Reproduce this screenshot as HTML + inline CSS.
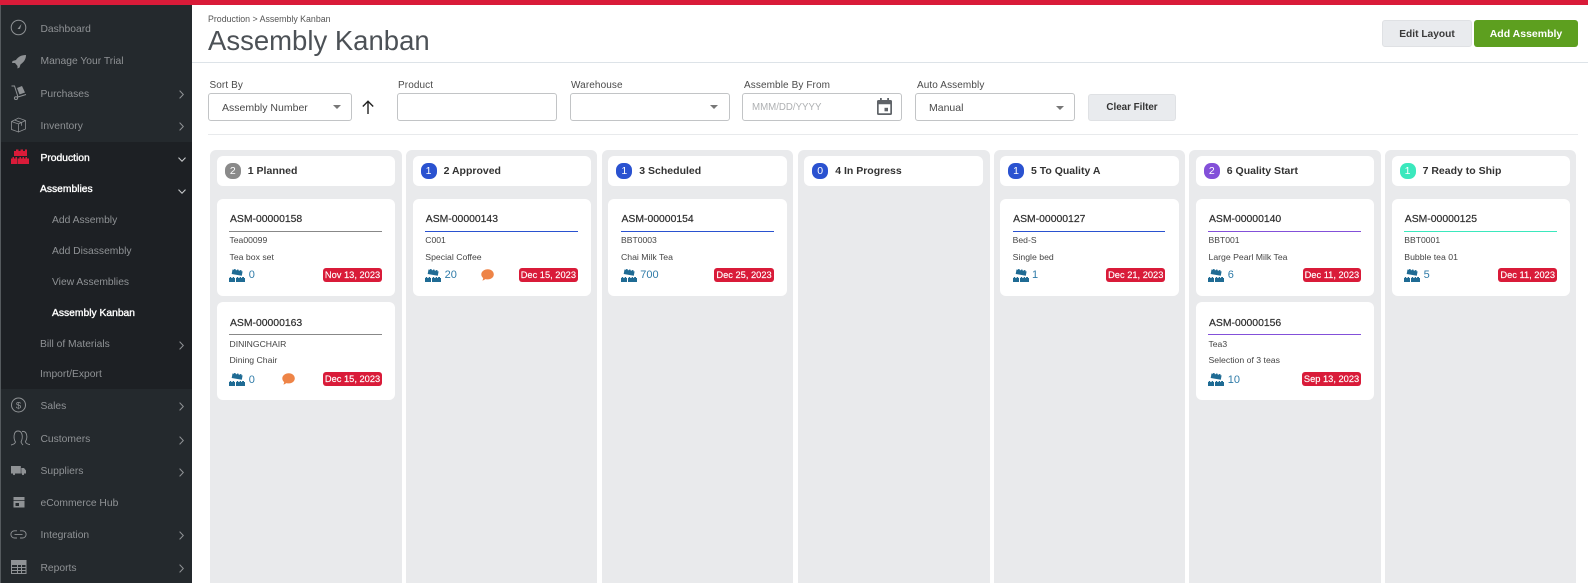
<!DOCTYPE html>
<html><head><meta charset="utf-8"><title>Assembly Kanban</title>
<style>
*{box-sizing:border-box}
html,body{margin:0;padding:0;width:1588px;height:583px;overflow:hidden;background:#fff;font-family:"Liberation Sans",sans-serif;color:#333}
.a,.t{position:absolute}
.t{white-space:nowrap;line-height:16px;height:16px}
#top{position:absolute;left:0;top:0;width:1588px;height:5px;background:#d91b39;z-index:3}
#side{position:absolute;left:0;top:0;width:192px;height:583px;background:#24292d;border-left:1px solid #555a5e}
#act{position:absolute;left:1px;top:142px;width:191px;height:247px;background:#1d2024}
.n{font-size:10.3px;color:#8f9295;margin-top:1px}
.n.w{color:#fff;-webkit-text-stroke:.35px #fff}
.ch{position:absolute;left:178.500px;width:5px;height:9px}
.l{font-size:10px;color:#4a4a4a;letter-spacing:.1px}
.i{position:absolute;border:1px solid #c2c4c6;border-radius:3px;height:28px;top:93px;background:#fff}
.car{position:absolute;width:0;height:0;border-left:4px solid transparent;border-right:4px solid transparent;border-top:4px solid #777;top:105px}
.v{font-size:10.5px;color:#4a4a4a}
.b{position:absolute;top:20px;height:27px;border-radius:3px;font-size:10.2px;font-weight:bold;text-align:center;line-height:27px}
.col{position:absolute;top:150px;height:433px;width:191.500px;background:#e9eaec;border-radius:6px 6px 0 0}
.h{position:absolute;left:6.800px;top:6px;width:178.600px;height:30px;background:#fff;border-radius:6px}
.bd{position:absolute;left:8px;top:7px;width:16px;height:16px;border-radius:7px;color:#fff;font-size:10.5px;text-align:center;line-height:16px}
.ht{position:absolute;left:31px;top:7px;line-height:16px;font-size:10.5px;font-weight:bold;color:#333;white-space:nowrap}
.c{position:absolute;left:6.800px;top:49px;width:178.600px;height:97px;background:#fff;border-radius:6px}
.c.two{top:152px;height:98px}
.c .ti{position:absolute;left:13.200px;top:13px;font-size:10.4px;line-height:16px;color:#2e2e2e;-webkit-text-stroke:.2px #2e2e2e;white-space:nowrap}
.c .ln{position:absolute;left:12.700px;right:13.200px;top:32px;height:1px;background:#888}
.c .co{position:absolute;left:12.700px;top:33px;font-size:8.600px;line-height:16px;color:#444;white-space:nowrap}
.c .de{position:absolute;left:12.700px;top:50px;font-size:8.700px;line-height:16px;color:#444;white-space:nowrap}
.c .ic{position:absolute;left:12.700px;top:69px;width:16px;height:14px}
.c .q{position:absolute;left:32px;top:68px;font-size:11px;line-height:16px;color:#2f7ba8}
.c .dt{position:absolute;right:13.200px;top:69px;height:14px;padding:0 2px;background:#d91b39;border-radius:3px;color:#fff;font-size:9.300px;line-height:14px;white-space:nowrap;-webkit-text-stroke:.15px #fff}
.c .m{position:absolute;top:71px;left:65px;width:13px;height:12px}
.two .ti{top:14px}.two .ln{top:32px}.two .co{top:34px}.two .de{top:50px}.two .ic{top:70px}.two .q{top:69.500px}.two .dt{top:70px}.two .m{top:71px}
.bl .ln{background:#2a52d0}
.pu .ln{background:#8350d9}
.te .ln{background:#3be8bd}
</style></head><body>
<svg width="0" height="0" style="position:absolute">
<symbol id="br" viewBox="0 0 16 14"><path d="M3.500 1.500l1.500.3.100-.8 1.700.3-.1.800 1.200.2.100-.8 1.700.3-.1.800 1.200.2.100-.8 1.700.3-.2.900 1.200.2-.8 4.400L2.700 6z" fill="currentColor"/><path d="M0 14V10h.8V9h1.400v1h1.500V9h1.400v1h.9v4zM7 14v-4h.8V9h1.400v1h1.500V9h1.400v1h1V9H15v1h1v4z" fill="currentColor"/></symbol>
<symbol id="cm" viewBox="0 0 13 12"><path d="M6.800.3C3.300.3.300 2.500.300 5.400c0 1.500.7 2.700 1.900 3.700L1.500 11.700l3-1.600c.7.200 1.500.3 2.300.3 3.400 0 6-2.200 6-5S10.200.3 6.800.3z" fill="#ee8447"/></symbol>
<symbol id="rt" viewBox="0 0 5 9"><path d="M.6.600L4.300 4.500.6 8.400" fill="none" stroke="#8f9295" stroke-width="1"/></symbol>
<symbol id="dn" viewBox="0 0 8 5"><path d="M.5.600L4 4.200 7.500.6" fill="none" stroke="#c8cacc" stroke-width="1.100"/></symbol>
</svg>
<div id="top"></div>
<div id="side"></div>
<div id="act"></div>

<!-- sidebar icons -->
<svg class="a" style="left:0;top:0" width="192" height="583" fill="none" stroke="#8f9295" stroke-width="1">
<circle cx="18.500" cy="27.500" r="7.300"/><path d="M17.500 29l4-5-1.500 5z" fill="#8f9295" stroke="none"/>
<path d="M26 55C21 55 18 57 16 60L12.500 61 12 63 15 63 17.500 66 17.500 68.500 19.500 67.500 20.500 64.500C24 62 26 59 26 55z" fill="#8f9295" stroke="none"/>
<path d="M11.500 86h3l3.500 11M16 99.500c1 0 1.600-.6 1.600-1.400s-.6-1.400-1.600-1.400-1.600.6-1.600 1.400.6 1.400 1.600 1.400zM18 97l8-2.500"/><path d="M17 88l5-2 3 6.500-5.500 2z" fill="#8f9295" stroke="none"/>
<path d="M11.500 121.500l7-3.500 7 2.500v8.500l-7 3-7-2.500zM11.500 121.500l7 2.500 7-3.500M18.500 124v8.500M14.500 120l7 2.700v3" stroke-width=".8"/>
<circle cx="18.500" cy="405" r="7"/><text x="18.500" y="408.500" font-size="9.500" fill="#8f9295" stroke="none" text-anchor="middle" font-family="Liberation Sans">$</text>
<path d="M11 445c2.500-.5 4-1.500 4.500-3-2-3-2.500-11 2.500-11s5 7 3 11c.5 1.500 1 2 2 3M22 431.500c5-1 6 6 3.500 10 0 1.500 2 3 4.500 3" stroke-width=".9"/>
<path d="M11 466h9.800v7.500H11zM21.300 468h2.700l2 2.500v3h-4.700z" fill="#8f9295" stroke="none"/><circle cx="14" cy="474" r="1.100" fill="#8f9295" stroke="none"/><circle cx="23" cy="474" r="1.100" fill="#8f9295" stroke="none"/>
<path d="M13.500 497h11v3h-11zM13.500 500.800h11v6.700h-11z" fill="#8f9295" stroke="none"/><path d="M15.500 503h3.500v3h-3.500z" fill="#24292d" stroke="none"/>
<path d="M17 530.800h-2.500a3.600 3.600 0 0 0 0 7.200h2.500M20 530.800h2.500a3.600 3.600 0 0 1 0 7.200H20M14.500 534.400h8" stroke-width=".9"/>
<path d="M11.500 560.500h14.500v13H11.500zM11.500 564.500h14.500M11.500 567.500h14.500M11.500 570.500h14.500M17.500 564.500v9M21.500 564.500v9"/><path d="M11.500 560.500h14.500v4H11.500z" fill="#8f9295" stroke="none"/>
<path d="M14 151h2v-1.500h2.500v1.500h2v-1.500H23v1.500h2v-1.500h2V156H14z" fill="#d91b39" stroke="none"/><path d="M11 164v-5.500h1.500V157H14v1.500h1.500V157H17v1.500h.5V164zM18 164v-5.500h1.500V157H21v1.500h1.500V157H24v1.500h1.500V157H27v1.500h2V164z" fill="#d91b39" stroke="none"/>
</svg>

<div class="t n" style="left:40.500px;top:20.500px">Dashboard</div>
<div class="t n" style="left:40.500px;top:52.500px">Manage Your Trial</div>
<div class="t n" style="left:40.500px;top:85.500px">Purchases</div>
<div class="t n" style="left:40.500px;top:117.500px">Inventory</div>
<div class="t n w" style="left:40.500px;top:149.500px">Production</div>
<div class="t n w" style="left:40px;top:180.500px">Assemblies</div>
<div class="t n" style="left:52px;top:211.500px">Add Assembly</div>
<div class="t n" style="left:52px;top:242.500px">Add Disassembly</div>
<div class="t n" style="left:52px;top:273.500px">View Assemblies</div>
<div class="t n w" style="left:52px;top:305px">Assembly Kanban</div>
<div class="t n" style="left:40px;top:335.500px">Bill of Materials</div>
<div class="t n" style="left:40px;top:365.500px">Import/Export</div>
<div class="t n" style="left:40.500px;top:397.500px">Sales</div>
<div class="t n" style="left:40.500px;top:430.500px">Customers</div>
<div class="t n" style="left:40.500px;top:463px">Suppliers</div>
<div class="t n" style="left:40.500px;top:495px">eCommerce Hub</div>
<div class="t n" style="left:40.500px;top:526.500px">Integration</div>
<div class="t n" style="left:40.500px;top:559.500px">Reports</div>

<svg class="ch" style="top:90px"><use href="#rt"/></svg>
<svg class="ch" style="top:122px"><use href="#rt"/></svg>
<svg class="ch" style="top:341px"><use href="#rt"/></svg>
<svg class="ch" style="top:402px"><use href="#rt"/></svg>
<svg class="ch" style="top:435.500px"><use href="#rt"/></svg>
<svg class="ch" style="top:467.500px"><use href="#rt"/></svg>
<svg class="ch" style="top:531px"><use href="#rt"/></svg>
<svg class="ch" style="top:564px"><use href="#rt"/></svg>
<svg class="a" style="left:178px;top:156.500px" width="8" height="5"><use href="#dn"/></svg>
<svg class="a" style="left:178px;top:188.500px" width="8" height="5"><use href="#dn"/></svg>

<!-- header -->
<div class="t" style="left:208px;top:11px;font-size:8.800px;color:#555">Production &gt; Assembly Kanban</div>
<div class="a" style="left:208px;top:24px;font-size:27.500px;line-height:34px;color:#4c5156;white-space:nowrap">Assembly Kanban</div>
<div class="a" style="left:192px;top:62px;width:1396px;height:1px;background:#dde3e8"></div>
<div class="b" style="left:1382px;width:90px;background:#e9ebee;border:1px solid #dfe1e4;color:#3a3a3a">Edit Layout</div>
<div class="b" style="left:1474px;width:104px;background:#5d9f1f;color:#fff;line-height:28px;font-size:10.5px">Add Assembly</div>

<!-- filters -->
<div class="t l" style="left:209.500px;top:77.500px">Sort By</div>
<div class="t l" style="left:398px;top:77.500px">Product</div>
<div class="t l" style="left:571px;top:77.500px">Warehouse</div>
<div class="t l" style="left:744px;top:77.500px">Assemble By From</div>
<div class="t l" style="left:917px;top:77.500px">Auto Assembly</div>

<div class="i" style="left:208px;width:144px"></div>
<div class="t v" style="left:222px;top:99.500px;">Assembly Number</div>
<div class="car" style="left:332.500px"></div>
<svg class="a" style="left:360px;top:100px" width="16" height="14" fill="none" stroke="#222" stroke-width="1.400"><path d="M8 14V1.500M2.800 6.500L8 1.300l5.200 5.200"/></svg>
<div class="i" style="left:397px;width:160px"></div>
<div class="i" style="left:570px;width:160px"></div>
<div class="car" style="left:709.500px"></div>
<div class="i" style="left:742px;width:160px"></div>
<div class="t" style="left:752px;top:100px;font-size:9.700px;color:#aeb0b2">MMM/DD/YYYY</div>
<svg class="a" style="left:877px;top:98px" width="15" height="17"><path d="M3 0h1.800v2h5.400V0H12v2h1.500A1.500 1.500 0 0 1 15 3.500v12a1.500 1.500 0 0 1-1.500 1.500h-12A1.500 1.500 0 0 1 0 15.500v-12A1.500 1.500 0 0 1 1.500 2H3zM1.700 6.200v9.100h11.600V6.200z" fill="#5f6368"/><rect x="7.500" y="9.800" width="3.500" height="3.500" fill="#5f6368"/></svg>
<div class="i" style="left:915px;width:160px"></div>
<div class="t v" style="left:929px;top:99.500px">Manual</div>
<div class="car" style="left:1055.500px;top:106px"></div>
<div class="b" style="left:1088px;top:94px;width:88px;background:#e9ebee;border:1px solid #dfe1e4;color:#333;line-height:25.500px;font-size:9.800px">Clear Filter</div>
<div class="a" style="left:208px;top:134px;width:1370px;height:1px;background:#e8eaec"></div>

<!-- columns -->
<div class="col" style="left:210px">
 <div class="h"><div class="bd" style="background:#8a8a8a">2</div><div class="ht">1 Planned</div></div>
 <div class="c"><div class="ti">ASM-00000158</div><div class="ln"></div><div class="co">Tea00099</div><div class="de">Tea box set</div><svg class="ic" style="color:#1f6b94"><use href="#br"/></svg><div class="q">0</div><div class="dt">Nov 13, 2023</div></div>
 <div class="c two"><div class="ti">ASM-00000163</div><div class="ln"></div><div class="co">DININGCHAIR</div><div class="de">Dining Chair</div><svg class="ic" style="color:#1f6b94"><use href="#br"/></svg><div class="q">0</div><svg class="m"><use href="#cm"/></svg><div class="dt">Dec 15, 2023</div></div>
</div>
<div class="col bl" style="left:405.800px">
 <div class="h"><div class="bd" style="background:#2a52d0">1</div><div class="ht">2 Approved</div></div>
 <div class="c"><div class="ti">ASM-00000143</div><div class="ln"></div><div class="co">C001</div><div class="de">Special Coffee</div><svg class="ic" style="color:#1f6b94"><use href="#br"/></svg><div class="q">20</div><svg class="m" style="top:70px;left:68px"><use href="#cm"/></svg><div class="dt">Dec 15, 2023</div></div>
</div>
<div class="col bl" style="left:601.500px">
 <div class="h"><div class="bd" style="background:#2a52d0">1</div><div class="ht">3 Scheduled</div></div>
 <div class="c"><div class="ti">ASM-00000154</div><div class="ln"></div><div class="co">BBT0003</div><div class="de">Chai Milk Tea</div><svg class="ic" style="color:#1f6b94"><use href="#br"/></svg><div class="q">700</div><div class="dt">Dec 25, 2023</div></div>
</div>
<div class="col bl" style="left:798px">
 <div class="h" style="left:6.200px"><div class="bd" style="background:#2a52d0">0</div><div class="ht">4 In Progress</div></div>
</div>
<div class="col bl" style="left:993.700px">
 <div class="h" style="left:6.300px"><div class="bd" style="background:#2a52d0">1</div><div class="ht">5 To Quality A</div></div>
 <div class="c" style="left:6.300px"><div class="ti">ASM-00000127</div><div class="ln"></div><div class="co">Bed-S</div><div class="de">Single bed</div><svg class="ic" style="color:#1f6b94"><use href="#br"/></svg><div class="q">1</div><div class="dt">Dec 21, 2023</div></div>
</div>
<div class="col pu" style="left:1189px">
 <div class="h"><div class="bd" style="background:#8350d9">2</div><div class="ht">6 Quality Start</div></div>
 <div class="c"><div class="ti">ASM-00000140</div><div class="ln"></div><div class="co">BBT001</div><div class="de">Large Pearl Milk Tea</div><svg class="ic" style="color:#1f6b94"><use href="#br"/></svg><div class="q">6</div><div class="dt">Dec 11, 2023</div></div>
 <div class="c two"><div class="ti">ASM-00000156</div><div class="ln"></div><div class="co">Tea3</div><div class="de">Selection of 3 teas</div><svg class="ic" style="color:#1f6b94"><use href="#br"/></svg><div class="q">10</div><div class="dt">Sep 13, 2023</div></div>
</div>
<div class="col te" style="left:1384.800px">
 <div class="h"><div class="bd" style="background:#3be8bd">1</div><div class="ht">7 Ready to Ship</div></div>
 <div class="c"><div class="ti">ASM-00000125</div><div class="ln"></div><div class="co">BBT0001</div><div class="de">Bubble tea 01</div><svg class="ic" style="color:#1f6b94"><use href="#br"/></svg><div class="q">5</div><div class="dt">Dec 11, 2023</div></div>
</div>
</body></html>
